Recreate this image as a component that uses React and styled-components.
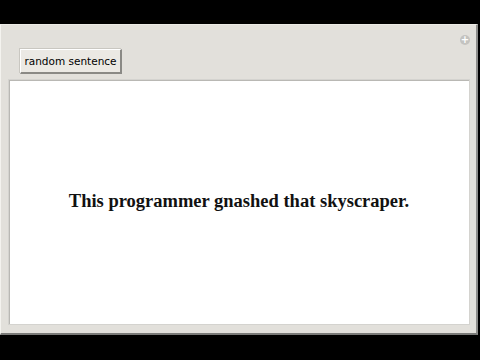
import styled, { createGlobalStyle } from "styled-components";

const GlobalStyle = createGlobalStyle`
    html, body {
        margin: 0;
        padding: 0;
        background: #000000;
        width: 480px;
        height: 360px;
        overflow: hidden;
    }
`;

export default function App() {
    return (
        <>
            <GlobalStyle />
            <StyledScreen>
                <StyledWindow>
                    <StyledToolbar>
                        <StyledButton>random sentence</StyledButton>
                        <StyledPlus>+</StyledPlus>
                    </StyledToolbar>
                    <StyledPanel>
                        <StyledSentence>This programmer gnashed that skyscraper.</StyledSentence>
                    </StyledPanel>
                </StyledWindow>
            </StyledScreen>
        </>
    );
}

const StyledScreen = styled.div`
    width: 480px;
    height: 360px;
    padding-top: 24px;
    box-sizing: border-box;
`;

const StyledWindow = styled.div`
    width: 478px;
    height: 311px;
    box-sizing: border-box;
    background: #e2e0db;
    border-left: 1px solid #f4f3ef;
    border-top: 1px solid #ecebe6;
    border-right: 2px solid #8c8c8a;
    border-bottom: 2px solid #7a7a78;
    display: flex;
    flex-direction: column;
`;

const StyledToolbar = styled.div`
    display: flex;
    justify-content: space-between;
    align-items: flex-start;
    padding: 10px 6px 5px 19px;
`;

const StyledButton = styled.button`
    margin-top: 14px;
    height: 25px;
    width: 102px;
    padding: 0;
    background: #ebe9e4;
    border-top: 1px solid #ffffff;
    border-left: 1px solid #ffffff;
    border-right: 2px solid #8a8985;
    border-bottom: 2px solid #8a8985;
    box-shadow: -1px -1px 0 #c9c7c1;
    font-family: "DejaVu Sans", sans-serif;
    font-size: 10.5px;
    color: #000000;
`;

const StyledPlus = styled.div`
    width: 10px;
    height: 10px;
    border-radius: 50%;
    background: #c4c3c0;
    color: #ffffff;
    font-family: "DejaVu Sans", sans-serif;
    font-weight: bold;
    font-size: 10px;
    line-height: 10px;
    text-align: center;
`;

const StyledPanel = styled.div`
    margin: 0 6px 0 7px;
    height: 246px;
    box-sizing: border-box;
    background: #ffffff;
    border: 1px solid #d4d3cf;
    box-shadow: inset 1px 1px 0 #b9b8b4;
    display: flex;
    align-items: center;
    justify-content: center;
`;

const StyledSentence = styled.div`
    font-family: "Liberation Serif", serif;
    font-weight: bold;
    font-size: 18.5px;
    color: #111111;
    margin-top: -2px;
`;
